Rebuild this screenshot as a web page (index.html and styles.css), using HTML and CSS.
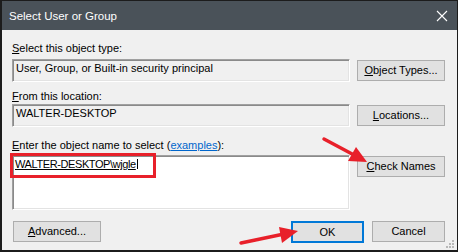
FILE: index.html
```html
<!DOCTYPE html>
<html>
<head>
<meta charset="utf-8">
<link rel="stylesheet" href="styles.css">
</head>
<body>
<div class="window">
  <div class="titlebar">
    <span class="title">Select User or Group</span>
    <svg class="close" width="12" height="12" viewBox="0 0 12 12"><path d="M1 1 L11 11 M11 1 L1 11" stroke="#fff" stroke-width="1.1" fill="none"/></svg>
  </div>
  <div class="content">
    <div class="label l1"><u>S</u>elect this object type:</div>
    <div class="row">
      <div class="field">User, Group, or Built-in security principal</div>
      <button class="btn"><u>O</u>bject Types...</button>
    </div>
    <div class="label l2"><u>F</u>rom this location:</div>
    <div class="row">
      <div class="field">WALTER-DESKTOP</div>
      <button class="btn"><u>L</u>ocations...</button>
    </div>
    <div class="label l3"><u>E</u>nter the object name to select (<span class="link">examples</span>):</div>
    <div class="row">
      <div class="field area"><span class="typed">WALTER-DESKTOP\wjgle</span><span class="caret"></span></div>
      <button class="btn"><u>C</u>heck Names</button>
    </div>
    <div class="footer">
      <button class="btn adv"><u>A</u>dvanced...</button>
      <div class="spacer"></div>
      <button class="btn ok">OK</button>
      <button class="btn cancel">Cancel</button>
    </div>
  </div>
  <svg class="overlay" width="458" height="252" viewBox="0 0 458 252">
    <rect x="11.5" y="154.5" width="143" height="22" fill="none" stroke="#e8202a" stroke-width="3"/>
    <line x1="324" y1="139" x2="354" y2="155" stroke="#e8202a" stroke-width="3.5" stroke-linecap="round"/>
    <polygon points="367,162 348,161 356,147" fill="#e8202a"/>
    <line x1="241" y1="243" x2="284" y2="234" stroke="#e8202a" stroke-width="3.5" stroke-linecap="round"/>
    <polygon points="298,231 282,243 279,227" fill="#e8202a"/>
  </svg>
  <svg class="grip" width="10" height="10" viewBox="0 0 10 10">
    <rect x="7" y="1" width="2" height="2" fill="#b8b8b8"/>
    <rect x="4" y="4" width="2" height="2" fill="#b8b8b8"/>
    <rect x="7" y="4" width="2" height="2" fill="#b8b8b8"/>
    <rect x="1" y="7" width="2" height="2" fill="#b8b8b8"/>
    <rect x="4" y="7" width="2" height="2" fill="#b8b8b8"/>
    <rect x="7" y="7" width="2" height="2" fill="#b8b8b8"/>
  </svg>
</div>
</body>
</html>
```
FILE: styles.css
```css
html, body {
  margin: 0;
  padding: 0;
  background: #f0f0f0;
}
.window {
  position: relative;
  width: 458px;
  height: 252px;
  box-sizing: border-box;
  border: 1px solid #1c1c1c;
  border-left-width: 2px;
  border-bottom-width: 2px;
  background: #f0f0f0;
  font-family: "Liberation Sans", Arial, sans-serif;
  font-size: 11px;
  color: #000;
  overflow: hidden;
}
.titlebar {
  height: 29px;
  background: #4a5259;
  display: flex;
  align-items: center;
  padding-left: 7px;
  padding-right: 9px;
}
.title {
  color: #fff;
  font-size: 11.5px;
  flex: 1;
  padding-top: 1px;
}
.close {
  display: block;
  margin-top: 1px;
}
.content {
  padding: 0 12px 0 10px;
}
.label {
  line-height: 15px;
  height: 15px;
  white-space: nowrap;
}
.l1 { margin-top: 11px; margin-bottom: 3px; }
.l2 { margin-top: 7px; margin-bottom: 0; }
.l3 { margin-top: 11px; margin-bottom: 2px; }
.link {
  color: #0066cc;
  text-decoration: underline;
}
.row {
  display: grid;
  grid-template-columns: 1fr 88px;
  column-gap: 7px;
  align-items: start;
}
.field {
  box-sizing: border-box;
  height: 23px;
  border: 1px solid;
  border-color: #a0a0a0 #ffffff #ffffff #a0a0a0;
  box-shadow: inset 1px 1px 0 #8a8a8a, inset -1px -1px 0 #e3e3e3;
  background: #f0f0f0;
  padding: 1px 3px 0;
  line-height: 15px;
  white-space: nowrap;
}
.area {
  height: 55px;
  background: #fff;
  padding: 1px 2px 0;
}
.typed {
  text-decoration: underline;
  letter-spacing: -0.4px;
}
.caret {
  display: inline-block;
  width: 1px;
  height: 10px;
  background: #000;
  vertical-align: -1px;
  margin-left: 1px;
}
.btn {
  box-sizing: border-box;
  height: 21px;
  margin-top: 1px;
  padding: 0;
  border: 1px solid #adadad;
  background: #e1e1e1;
  font-family: "Liberation Sans", Arial, sans-serif;
  font-size: 11px;
  color: #000;
  line-height: 19px;
  text-align: center;
}
.footer {
  display: flex;
  margin-top: 11px;
  align-items: flex-start;
}
.footer .btn {
  margin-top: 0;
}
.adv {
  width: 88px;
  margin-left: 1px;
}
.spacer {
  flex: 1;
}
.ok {
  width: 73px;
  height: 22px;
  border: 2px solid #0078d7;
  margin-right: 8px;
}
.cancel {
  width: 73px;
}
.overlay {
  position: absolute;
  left: -2px;
  top: -1px;
  pointer-events: none;
}
.grip {
  position: absolute;
  right: 2px;
  bottom: 1px;
}
```
